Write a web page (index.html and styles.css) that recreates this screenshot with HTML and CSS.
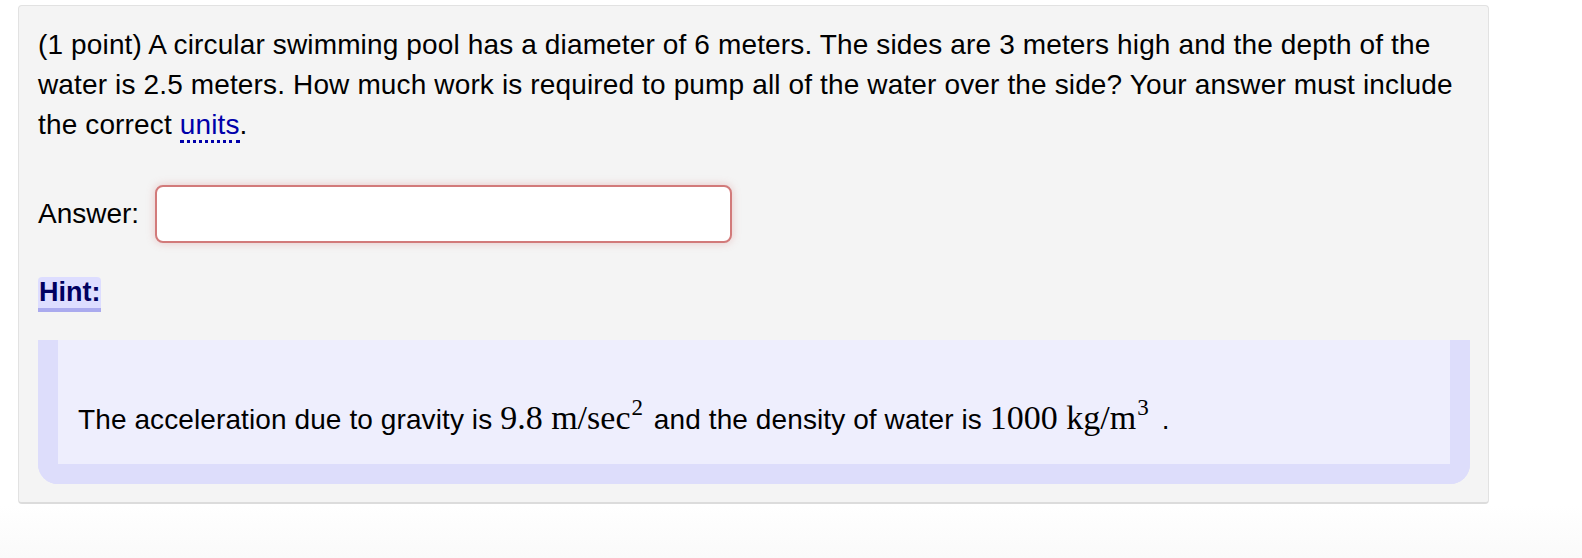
FILE: index.html
```html
<!DOCTYPE html>
<html>
<head>
<meta charset="utf-8">
<link rel="stylesheet" href="styles.css">
</head>
<body>
<div class="page">
  <div class="problem">
    <p class="question">(1 point) A circular swimming pool has a diameter of 6 meters. The sides are 3 meters high and the depth of the water is 2.5 meters. How much work is required to pump all of the water over the side? Your answer must include the correct <span class="units">units</span>.</p>
    <div class="answer-row">
      <span class="answer-label">Answer:</span>
      <input class="answer-input" type="text">
    </div>
    <div class="hint-row"><span class="hint-label">Hint:</span></div>
    <div class="hint-box">
      <div class="hint-content">The acceleration due to gravity is <span class="math">9.8&nbsp;m/sec<sup>2</sup></span> and the density of water is <span class="math">1000&nbsp;kg/m<sup>3</sup></span><span class="dot">.</span></div>
    </div>
  </div>
</div>
</body>
</html>
```
FILE: styles.css
```css
html, body {
  margin: 0;
  padding: 0;
}
body {
  background: linear-gradient(to bottom, #ffffff 0px, #ffffff 505px, #fafafa 558px);
  min-height: 558px;
  font-family: "Liberation Sans", Arial, sans-serif;
  color: #000;
}
.page {
  padding: 5px 0 0 18px;
}
.problem {
  width: 1469px;
  height: 496px;
  box-sizing: content-box;
  background: #f4f4f4;
  border: 1px solid #e2e2e2;
  border-bottom: 2px solid #dcdcdc;
  border-radius: 4px;
  padding: 0;
  display: flex;
  flex-direction: column;
}
.question {
  margin: 19px 0 0 19px;
  font-size: 28px;
  line-height: 40px;
  letter-spacing: 0.14px;
  width: 1436px;
}
.units {
  color: #0000aa;
  border-bottom: 3px dotted #0000aa;
}
.answer-row {
  display: flex;
  align-items: center;
  margin: 40px 0 0 19px;
  gap: 16px;
}
.answer-label {
  font-size: 28px;
}
.answer-input {
  width: 577px;
  height: 58px;
  box-sizing: border-box;
  border: 2px solid #d27a7a;
  border-radius: 8px;
  background: #fff;
  box-shadow: 0 0 8px rgba(210, 110, 110, 0.35);
  margin: 0;
}
.hint-row {
  margin: 34px 0 0 19px;
  display: flex;
}
.hint-label {
  font-size: 27px;
  font-weight: bold;
  color: #000060;
  background: #ddddff;
  border-bottom: 4px solid #aaaaee;
  border-radius: 4px 4px 0 0;
  line-height: 31px;
  padding: 0 1px;
}
.hint-box {
  margin: 28px 0 0 19px;
  width: 1432px;
  box-sizing: border-box;
  border-style: solid;
  border-color: #ddddfb;
  border-width: 0 20px 20px 20px;
  border-radius: 0 0 20px 20px;
  background: #eeeefd;
  height: 144px;
}
.hint-content {
  padding: 58px 0 0 20px;
  font-size: 28px;
  line-height: 40px;
  letter-spacing: 0.1px;
}
.math {
  font-family: "Liberation Serif", "Times New Roman", serif;
  font-size: 34px;
  letter-spacing: 0;
}
.math sup {
  font-size: 23px;
  vertical-align: 0.62em;
  line-height: 0;
  margin-left: 1px;
  margin-right: 3px;
}
.dot {
  margin-left: 10px;
}
```
